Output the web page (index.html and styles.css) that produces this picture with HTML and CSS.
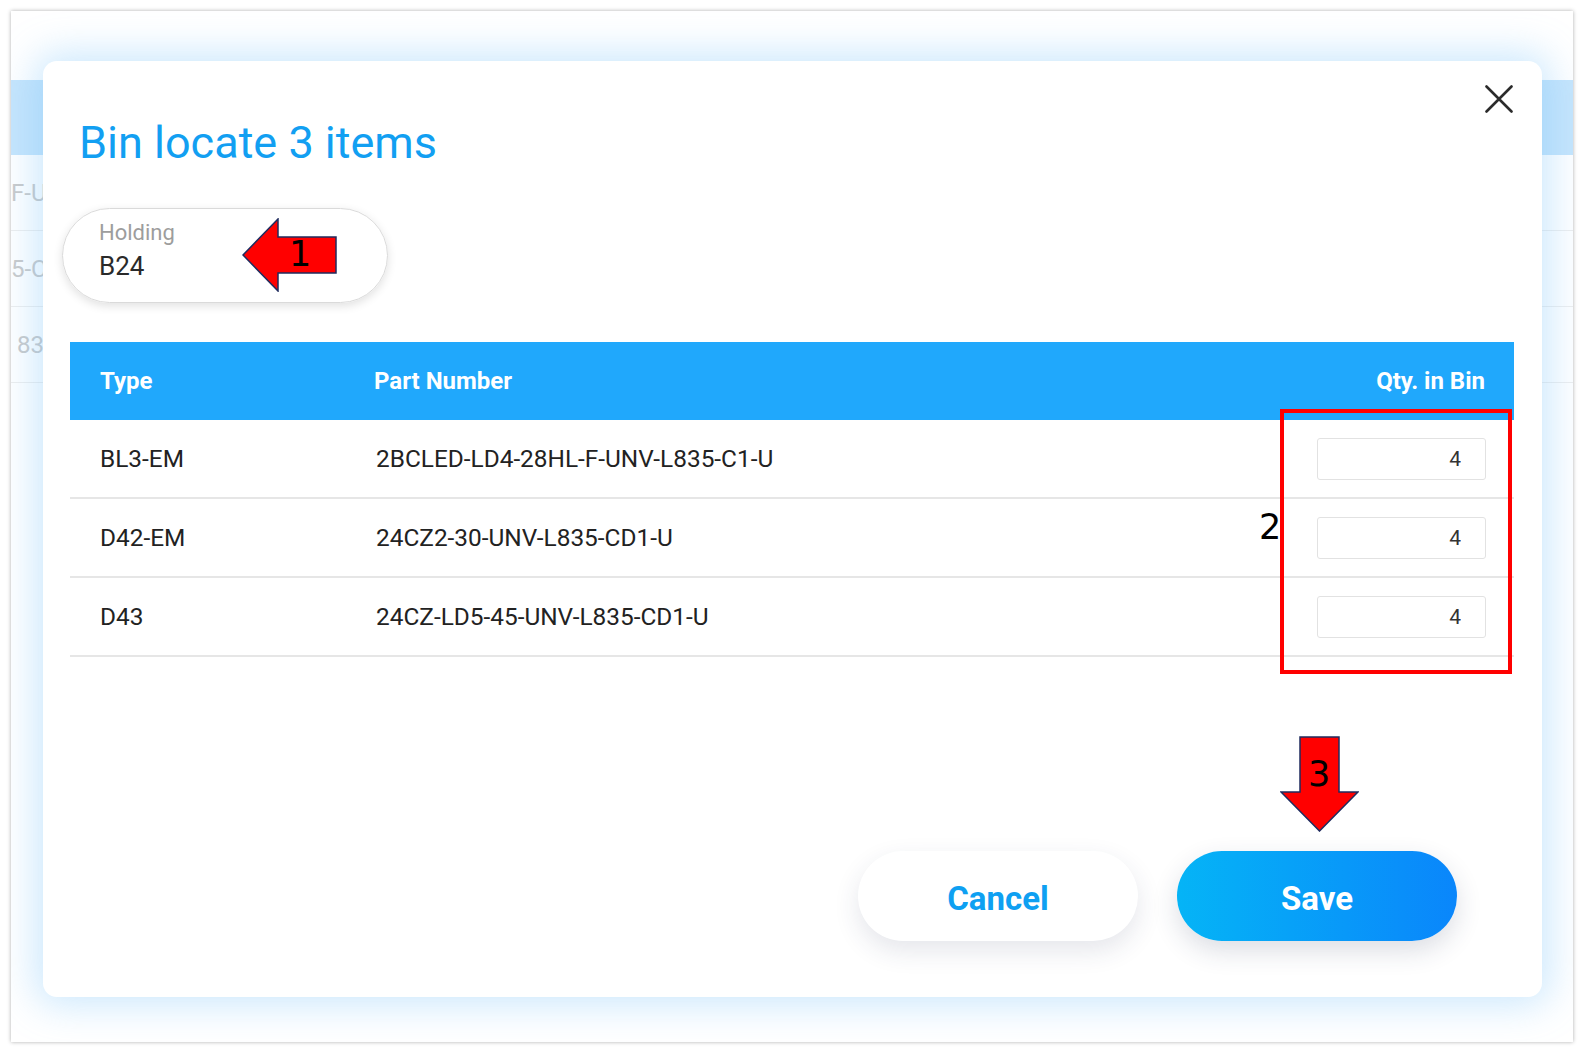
FILE: index.html
```html
<!DOCTYPE html>
<html lang="en">
<head>
<meta charset="utf-8">
<title>Bin locate 3 items</title>
<link rel="stylesheet" href="styles.css">
</head>
<body>
<div class="frame">
  <div class="bg-app">
    <div class="bg-band"></div>
    <div class="bg-row"><div class="bg-cell">F-U</div></div>
    <div class="bg-row"><div class="bg-cell">5-C</div></div>
    <div class="bg-row"><div class="bg-cell bg-cell-in">83</div></div>
  </div>

  <div class="modal">
    <button class="close" aria-label="Close">
      <svg viewBox="0 0 28 28" width="28" height="28"><path d="M1.5 1.5 L26.5 26.5 M26.5 1.5 L1.5 26.5" stroke="#2b2b2b" stroke-width="2.6" stroke-linecap="round" fill="none"/></svg>
    </button>

    <h1 class="title">Bin locate 3 items</h1>

    <div class="holding">
      <div class="holding-label">Holding</div>
      <div class="holding-value">B24</div>
    </div>

    <div class="items">
      <div class="items-head">
        <div class="c-type">Type</div>
        <div class="c-part">Part Number</div>
        <div class="c-qty">Qty. in Bin</div>
      </div>
      <div class="items-row">
        <div class="c-type">BL3-EM</div>
        <div class="c-part">2BCLED-LD4-28HL-F-UNV-L835-C1-U</div>
        <div class="c-qty"><input class="qty" type="text" value="4"></div>
      </div>
      <div class="items-row">
        <div class="c-type">D42-EM</div>
        <div class="c-part">24CZ2-30-UNV-L835-CD1-U</div>
        <div class="c-qty"><input class="qty" type="text" value="4"></div>
      </div>
      <div class="items-row">
        <div class="c-type">D43</div>
        <div class="c-part">24CZ-LD5-45-UNV-L835-CD1-U</div>
        <div class="c-qty"><input class="qty" type="text" value="4"></div>
      </div>
    </div>

    <div class="actions">
      <button class="btn btn-cancel">Cancel</button>
      <button class="btn btn-save">Save</button>
    </div>

    <!-- annotations -->
    <div class="anno anno-arrow1">
      <svg viewBox="0 0 95 74" width="95" height="74"><polygon points="1,37 36,1 36,19 94,19 94,55 36,55 36,73" fill="#ff0000" stroke="#1f2b5e" stroke-width="1.5" stroke-linejoin="miter"/></svg>
      <span class="anno-num n1">1</span>
    </div>
    <div class="anno anno-box"></div>
    <span class="anno anno-num n2">2</span>
    <div class="anno anno-arrow3">
      <svg viewBox="0 0 79 96" width="79" height="96"><polygon points="20,1 59,1 59,56 78,56 39.5,95 1,56 20,56" fill="#ff0000" stroke="#1f2b5e" stroke-width="1.5"/></svg>
      <span class="anno-num n3">3</span>
    </div>
  </div>
</div>
</body>
</html>
```

FILE: styles.css
```css
html, body {
  margin: 0;
  padding: 0;
  background: #ffffff;
}

body {
  font-family: Roboto, "Liberation Sans", Arial, sans-serif;
}

.frame {
  position: relative;
  width: 1562px;
  height: 1031px;
  margin: 11px;
  overflow: hidden;
  background: #ffffff;
  box-shadow: 0 0 4px rgba(0, 0, 0, 0.32);
}

/* faded application behind the dialog */
.bg-app {
  padding-top: 69px;
}

.bg-band {
  height: 75px;
  background: #c6e5fc;
}

.bg-row {
  height: 75px;
  border-bottom: 1px solid #eeeeee;
  display: flex;
  align-items: center;
}

.bg-cell {
  white-space: nowrap;
  font-size: 24px;
  color: #cacaca;
}

.bg-cell-in {
  padding-left: 6px;
}

/* dialog */
.modal {
  position: absolute;
  left: 32px;
  top: 50px;
  width: 1499px;
  height: 936px;
  box-sizing: border-box;
  padding: 56px 28px 56px 27px;
  display: flex;
  flex-direction: column;
  background: #ffffff;
  border-radius: 14px;
  box-shadow: 0 0 38px 8px rgba(110, 190, 248, 0.35);
}

.close {
  position: absolute;
  right: 29px;
  top: 24px;
  width: 28px;
  height: 28px;
  padding: 0;
  border: none;
  background: transparent;
  display: block;
}

.close svg {
  display: block;
}

.title {
  margin: 0 0 0 9px;
  font-size: 45px;
  line-height: 52px;
  font-weight: 400;
  color: #129ff2;
}

.holding {
  margin-top: 39px;
  margin-left: -8px;
  width: 326px;
  height: 95px;
  box-sizing: border-box;
  border: 1px solid #dadada;
  border-radius: 48px;
  box-shadow: 0 3px 10px rgba(0, 0, 0, 0.12);
  padding: 11px 0 0 36px;
}

.holding-label {
  font-size: 22px;
  line-height: 26px;
  color: #9d9d9d;
}

.holding-value {
  margin-top: 5px;
  font-size: 26px;
  line-height: 30px;
  color: #2a2a2a;
}

/* table */
.items {
  margin-top: 39px;
}

.items-head,
.items-row {
  display: grid;
  grid-template-columns: 306px 1fr 220px;
  align-items: center;
  box-sizing: border-box;
}

.items-head {
  height: 78px;
  background: #20a8fc;
  color: #ffffff;
  font-size: 24px;
  font-weight: 700;
}

.items-head .c-part {
  margin-left: -2px;
}

.items-row {
  height: 79px;
  border-bottom: 2px solid #e6e6e6;
  font-size: 24.4px;
  color: #222222;
}

.c-type {
  padding-left: 30px;
}

.c-qty {
  display: flex;
  justify-content: flex-end;
  padding-right: 28px;
}

.items-head .c-qty {
  padding-right: 29px;
}

.qty {
  width: 169px;
  height: 42px;
  box-sizing: border-box;
  border: 1px solid #e2e2e2;
  border-radius: 3px;
  padding: 0 24px 0 0;
  margin: 0;
  text-align: right;
  font-family: Roboto, "Liberation Sans", Arial, sans-serif;
  font-size: 21px;
  color: #333333;
  background: #ffffff;
  outline: none;
}

/* buttons */
.actions {
  margin-top: auto;
  display: flex;
  justify-content: flex-end;
  gap: 39px;
  padding-right: 57px;
}

.btn {
  width: 280px;
  height: 90px;
  border: none;
  border-radius: 45px;
  font-family: Roboto, "Liberation Sans", Arial, sans-serif;
  font-size: 33px;
  font-weight: 700;
  padding: 5px 0 0;
}

.btn-cancel {
  background: #ffffff;
  color: #0ea0f2;
  box-shadow: 0 10px 26px rgba(40, 50, 90, 0.12);
}

.btn-save {
  background: linear-gradient(90deg, #05b4f6 0%, #0a86fb 100%);
  color: #ffffff;
  box-shadow: 0 10px 26px rgba(40, 50, 90, 0.16);
}

/* annotations drawn over the screenshot */
.anno {
  position: absolute;
}

.anno svg {
  display: block;
}

.anno-num {
  font-family: "DejaVu Sans", "Liberation Sans", sans-serif;
  font-size: 35px;
  line-height: 36px;
  color: #000000;
}

.anno-arrow1 {
  left: 199px;
  top: 157px;
  width: 95px;
  height: 74px;
}

.anno-arrow1 .n1 {
  position: absolute;
  left: 47px;
  top: 18px;
}

.anno-box {
  left: 1237px;
  top: 348px;
  width: 232px;
  height: 265px;
  box-sizing: border-box;
  border: 4px solid #ff0000;
}

.n2 {
  left: 1216px;
  top: 448px;
}

.anno-arrow3 {
  left: 1237px;
  top: 675px;
  width: 79px;
  height: 96px;
}

.anno-arrow3 .n3 {
  position: absolute;
  left: 28px;
  top: 20px;
}
```
